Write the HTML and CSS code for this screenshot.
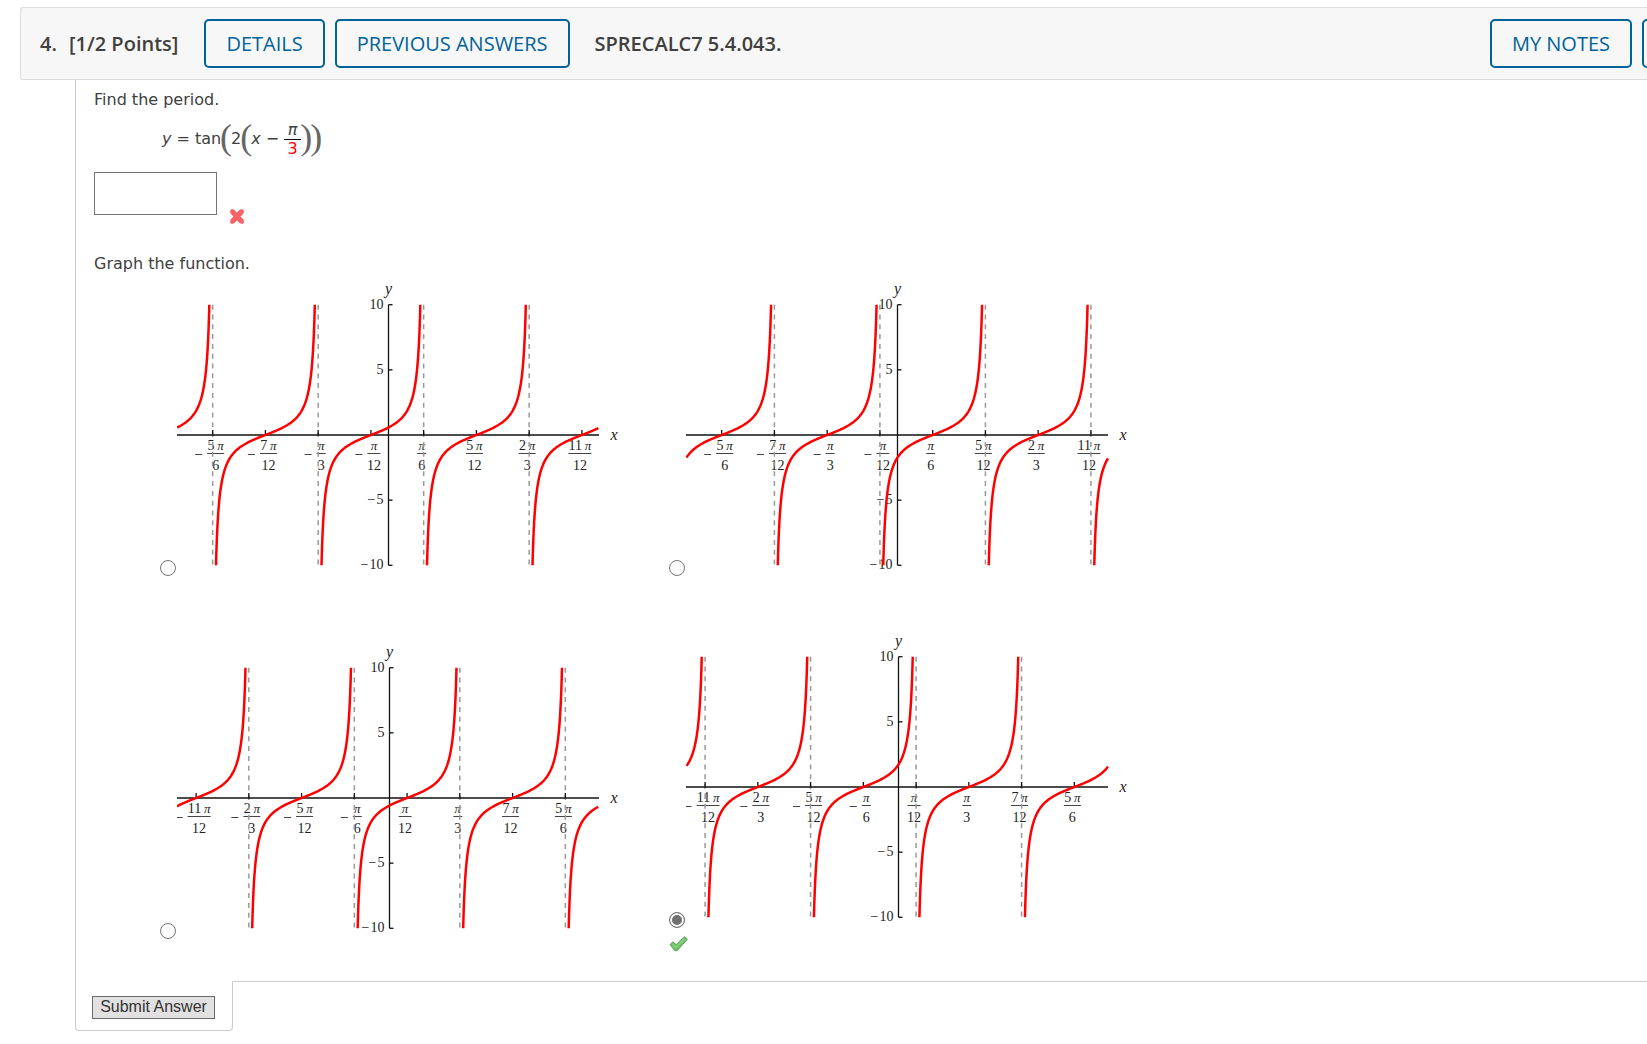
FILE: index.html
```html
<!DOCTYPE html>
<html lang="en">
<head>
  <meta charset="UTF-8">
  <meta name="viewport" content="width=device-width, initial-scale=1.0">
  <title>SPRECALC7 5.4.043.</title>
  <link rel="stylesheet" href="styles.css">
</head>
<body>
  <div class="question">
    <!-- Question header -->
    <header class="question-header">
      <span class="number">4.</span>
      <span class="points">[1/2 Points]</span>
      <button type="button">DETAILS</button>
      <button type="button">PREVIOUS ANSWERS</button>
      <strong class="code">SPRECALC7 5.4.043.</strong>
      <button type="button" class="notes">MY NOTES</button>
      <button type="button" class="more" aria-label="More"></button>
    </header>

    <form>
      <div class="question-body">
        <label class="prompt" for="period">Find the period.</label>
        <div class="equation">
          <i>y</i><span class="op">=</span><span>tan</span><span class="paren">(</span><span>2</span><span class="paren">(</span><i>x</i><span class="op">−</span><span class="frac"><i>π</i><span class="den">3</span></span><span class="paren">)</span><span class="paren">)</span>
        </div>
        <div class="answer">
          <input type="text" id="period" class="answer-box">
          <svg class="wrong" viewBox="0 0 16 17" role="img" aria-label="Incorrect">
            <path d="M3 3.2 L13 13.8 M13 3.2 L3 13.8" fill="none" stroke="#f4484c" stroke-width="5" stroke-linecap="butt"/>
            <path d="M3 3.2 L13 13.8 M13 3.2 L3 13.8" fill="none" stroke="#fb6467" stroke-width="4" stroke-linecap="round"/>
          </svg>
        </div>

        <p class="prompt graph-prompt">Graph the function.</p>
        <div class="choices">
          <div class="choice">
            <label><input type="radio" name="graph" aria-label="Graph 1"><svg class="graph" data-zero="-1" data-origin="211"></svg></label>
          </div>
          <div class="choice">
            <label><input type="radio" name="graph" aria-label="Graph 2"><svg class="graph" data-zero="2" data-origin="211"></svg></label>
          </div>
          <div class="choice">
            <label><input type="radio" name="graph" aria-label="Graph 3"><svg class="graph" data-zero="1" data-origin="212"></svg></label>
          </div>
          <div class="choice">
            <label><input type="radio" name="graph" aria-label="Graph 4" checked><svg class="graph" data-zero="-2" data-origin="212"></svg></label>
            <div class="mark">
              <svg class="right" viewBox="0 0 19 16" role="img" aria-label="Correct">
                <path d="M1 8.6 L4 5.8 L7.2 8.6 L15.5 .8 L18.4 3.2 L8 14.8 L6 14.8 Z" fill="#6cbf64" stroke="#5aa554" stroke-width="1" stroke-linejoin="round"/>
                <path d="M3 8 L7 11.2 L16 2.8" fill="none" stroke="#86cf7e" stroke-width="2"/>
              </svg>
            </div>
          </div>
        </div>
      </div>

      <div class="question-footer">
        <div class="tab"><button type="submit" class="submit">Submit Answer</button></div>
        <div class="rule"></div>
      </div>
    </form>
  </div>

  <script src="graphs.js"></script>
</body>
</html>
```
FILE: styles.css
```css
* { box-sizing: border-box; }
body { margin: 0; background: #fff; color: #404040; font-family: Verdana, "DejaVu Sans", sans-serif; font-size: 16px; line-height: 24px; }
.question { padding: 7px 0 13px 20px; overflow: hidden; }

.question-header {
  display: flex;
  align-items: center;
  height: 73px;
  padding-left: 19px;
  background: #f7f7f7;
  border: 1px solid #ddd;
  border-right: none;
  border-radius: 3px 0 0 3px;
  font-family: "Open Sans", sans-serif;
  font-size: 20px;
  font-weight: 600;
  white-space: nowrap;
}
.question-header button {
  flex: none;
  height: 49px;
  margin-right: 10px;
  padding: 0 20px;
  border: 2px solid #006298;
  border-radius: 5px;
  background: #f7f7f7;
  color: #006298;
  font: inherit;
  font-weight: 400;
  cursor: pointer;
}
.number { margin-right: 12px; }
.points { margin-right: 26px; }
.code { margin-left: 15px; font-weight: 600; }
.question-header .notes { margin-left: auto; }
/* runs off the right edge of the bar */
.question-header .more { width: 120px; margin-right: -115px; }

.question-body { margin-left: 55px; padding: 8px 0 29px 18px; border-left: 1px solid #ccc; }
.prompt { display: block; margin: 0; }
.graph-prompt { margin-top: 27px; }

.equation { display: flex; align-items: center; height: 38px; margin-top: 8px; padding-left: 68px; }
.op { margin: 0 5px; }
.paren { margin: 0 -1px; padding-bottom: 4px; color: #666; font-family: "Liberation Serif", serif; font-size: 36px; line-height: 36px; }
.frac { display: flex; flex-direction: column; align-items: center; width: 17px; line-height: 18px; }
.den { width: 100%; border-top: 1px solid #000; color: #f00; text-align: center; }

.answer { display: flex; align-items: flex-end; gap: 12px; height: 53px; margin-top: 14px; }
.answer-box { align-self: flex-start; width: 123px; height: 43px; padding: 4px; border: 1px solid #767676; font: inherit; }
.wrong { width: 16px; height: 17px; }

.choices { display: grid; grid-template-columns: max-content max-content; gap: 50px 42px; align-items: center; padding-left: 66px; }
.choice label { display: flex; align-items: flex-end; gap: 1px; }
.choice input { appearance: none; width: 16px; height: 16px; margin: 0 0 2px; border: 1px solid #767676; border-radius: 50%; background: #fff; }
.choice input:checked { background: #707070; box-shadow: inset 0 0 0 2px #fff; }
.mark { display: flex; align-items: flex-end; height: 22px; }
.right { width: 19px; height: 16px; }

.graph { display: block; width: 450px; height: 302px; fill: #222; font-family: "Liberation Serif", serif; font-size: 14px; }
.graph .axis { stroke: #111; stroke-width: 1.3; }
.graph .asymptote { stroke: #999; stroke-width: 1.5; stroke-dasharray: 5 4.8; }
.graph .bar { stroke: #444; stroke-width: 1; }
.graph .curve { fill: none; stroke: #f00; stroke-width: 2.5; }
.graph .name { font-size: 16px; font-style: italic; }
.graph .pi { font-size: 13px; font-style: italic; }
.graph .end { text-anchor: end; }
.graph .mid { text-anchor: middle; }

.question-footer { display: flex; margin-left: 55px; }
.tab { padding: 15px 17px 11px 16px; border: 1px solid #ccc; border-top: none; border-radius: 0 0 4px 4px; }
.rule { flex: 1; border-top: 1px solid #ccc; }
.submit {
  display: block;
  width: 123px;
  height: 23px;
  padding: 0 0 2px;
  border: 1px solid #6b6b6b;
  background: #e1e1e1;
  color: #333;
  font: 16px/19px Arial, "Liberation Sans", sans-serif;
}
```
FILE: graphs.js
```js
// Plots y = tan(2(x - zero * PI/12)) on [-PI, PI] x [-10, 10]
const WIDTH = 422;
const AXIS_Y = 159;
const UNIT_Y = 13.03;
const STEP = WIDTH / 24; // PI/12 in pixels

function gcd(a, b) {
  return b ? gcd(b, a % b) : a;
}

function line(cls, x1, y1, x2, y2) {
  return `<line class="${cls}" x1="${x1}" y1="${y1}" x2="${x2}" y2="${y2}"/>`;
}

function text(cls, x, y, s) {
  return `<text class="${cls}" x="${x}" y="${y}">${s}</text>`;
}

// k * PI/12 as a reduced fraction under its tick
function fraction(k, x) {
  const g = gcd(Math.abs(k), 12);
  const num = Math.abs(k) / g;
  const den = 12 / g;
  const bar = num > 9 ? 23 : num > 1 ? 17 : den > 9 ? 13 : 9;
  const total = k < 0 ? bar + 12 : bar;
  const left = x - (k < 0 ? 3 : 2) - total / 2;
  const mid = left + total - bar / 2;
  let out = line('bar', mid - bar / 2, AXIS_Y + 18.5, mid + bar / 2, AXIS_Y + 18.5);
  if (k < 0) out += line('bar', left, AXIS_Y + 19.5, left + 7, AXIS_Y + 19.5);
  out += text('mid', mid, AXIS_Y + 15, (num > 1 ? num + '\u2009' : '') + '<tspan class="pi">π</tspan>');
  out += text('mid', mid, AXIS_Y + 35, den);
  return out;
}

document.querySelectorAll('.graph').forEach(svg => {
  const zero = Number(svg.dataset.zero);
  const origin = Number(svg.dataset.origin) + 0.5;
  const top = AXIS_Y - 10 * UNIT_Y;
  const bottom = AXIS_Y + 10 * UNIT_Y;
  let labels = '', lines = '', curves = '';

  for (let k = -11; k <= 11; k++) {
    if ((k - zero) % 3 !== 0) continue;
    const x = origin + k * STEP;
    labels += fraction(k, x);
    if ((k - zero) % 6 !== 0) lines += line('asymptote', x, top, x, bottom);
    lines += line('axis', x, AXIS_Y - 5, x, AXIS_Y);
  }

  // one branch per period, cut off at y = +-10
  for (let c = zero - 18; c <= zero + 18; c += 6) {
    const points = [];
    for (let i = -100; i <= 100; i++) {
      const y = Math.sinh(i / 100 * Math.asinh(10));
      const x = origin + (c + Math.atan(y) * 6 / Math.PI) * STEP;
      if (x >= 0 && x <= WIDTH) points.push(x.toFixed(2) + ',' + (AXIS_Y - y * UNIT_Y).toFixed(2));
    }
    if (points.length > 1) curves += `<polyline class="curve" points="${points.join(' ')}"/>`;
  }

  lines += line('axis', 0, AXIS_Y, WIDTH, AXIS_Y);
  lines += line('axis', origin, top, origin, bottom);
  [10, 5, -5, -10].forEach(v => {
    const y = AXIS_Y - v * UNIT_Y;
    lines += line('axis', origin, y, origin + 4, y);
    labels += text('end', origin - 5, y + 4, v < 0 ? '−\u200a' + -v : v);
  });
  labels += text('name mid', origin, AXIS_Y - 141, 'y');
  labels += text('name mid', WIDTH + 15, AXIS_Y + 5, 'x');

  svg.innerHTML = labels + lines + curves;
});
```
